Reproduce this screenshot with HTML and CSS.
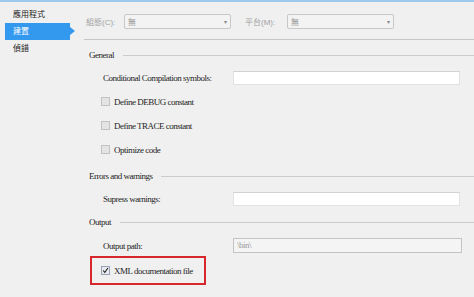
FILE: index.html
```html
<!DOCTYPE html>
<html lang="zh-Hant">
<head>
  <meta charset="UTF-8" />
  <title>建置</title>
  <link rel="stylesheet" href="styles.css">
</head>
<body>
  <div class="topline"></div>

  <div class="layout">
    <!-- Navegación lateral -->
    <ul class="sidebar">
      <li>應用程式</li>
      <li class="activo">建置</li>
      <li>偵錯</li>
    </ul>

    <div class="contenido">
      <div class="config">
        <label class="cfg-label cfg-1">組態(C):</label>
        <div class="combo"><span>無</span><i>▾</i></div>
        <label class="cfg-label cfg-2">平台(M):</label>
        <div class="combo"><span>無</span><i>▾</i></div>
      </div>

      <div class="panel">
        <div class="grupo"><span>General</span></div>
        <div class="campo"><label>Conditional Compilation symbols:</label><div class="caja"></div></div>
        <div class="check"><span class="box"></span>Define DEBUG constant</div>
        <div class="check"><span class="box"></span>Define TRACE constant</div>
        <div class="check"><span class="box"></span>Optimize code</div>

        <div class="grupo separado"><span>Errors and warnings</span></div>
        <div class="campo"><label>Supress warnings:</label><div class="caja"></div></div>

        <div class="grupo"><span>Output</span></div>
        <div class="campo alto"><label>Output path:</label><div class="caja gris">\bin\</div></div>
        <div class="check marcado">
          <span class="box"><svg width="9" height="9" viewBox="0 0 9 9"><path d="M1.5 4.5 L3.6 7 L7.6 1.3" fill="none" stroke="#1a1a1a" stroke-width="1.4"/></svg></span>XML documentation file
        </div>
      </div>
    </div>
  </div>
</body>
</html>
```

FILE: styles.css
```css
body { margin: 0; background: #f0f0f0; width: 474px; height: 297px; overflow: hidden; font-family: 'Liberation Serif', serif; color: #1e1e1e; }
.topline { height: 2px; background: #9cc9ec; border-bottom: 1px solid #f6f0ea; }

.layout { display: flex; }
.sidebar { list-style: none; margin: 0; padding: 3px 0 0 0; width: 84px; flex-shrink: 0; font-family: 'Liberation Sans', 'Noto Sans CJK TC', sans-serif; font-size: 8px; color: #222; }
.sidebar li { height: 17px; line-height: 17px; padding-left: 13px; }
.sidebar li.activo { position: relative; margin-left: 5px; width: 57px; padding-left: 8px; background: #3399ee; color: #fff; }
.sidebar li.activo::after { content: ""; position: absolute; right: -5px; top: 4px; border-left: 5px solid #3399ee; border-top: 4.5px solid transparent; border-bottom: 4.5px solid transparent; }

.contenido { flex: 1; }
.config { height: 36px; display: flex; align-items: center; border-bottom: 1px solid #c6c6c6; font-family: 'Liberation Sans', 'Noto Sans CJK TC', sans-serif; font-size: 8px; color: #a2a2a2; }
.cfg-label { padding-left: 2px; }
.cfg-1 { width: 38px; }
.cfg-2 { width: 42px; margin-left: 12px; }
.combo { width: 105px; height: 13px; border: 1px solid #c8c8c8; border-radius: 2px; background: #f3f3f3; display: flex; align-items: center; justify-content: space-between; padding: 0; }
.combo span { padding-left: 3px; color: #8c8c8c; }
.combo i { font-style: normal; font-size: 6px; padding-right: 3px; color: #888; }

.panel { display: flex; flex-direction: column; gap: 9px; padding-top: 8px; font-size: 9px; letter-spacing: -0.5px; }
.grupo { height: 14px; display: flex; align-items: center; padding-left: 5px; }
.grupo::after { content: ""; flex: 1; height: 1px; background: #cbcbcb; margin-left: 9px; }
.grupo.separado { margin-top: 3px; }
.campo { height: 14px; display: flex; align-items: center; padding-left: 19px; }
.campo.alto { height: 15px; }
.campo label { width: 130px; }
.caja { width: 227px; height: 100%; box-sizing: border-box; background: #fff; border: 1px solid #e2e2e2; border-top-color: #d2d2d2; }
.caja.gris { width: 229px; background: #f4f4f4; border: 1px solid #c4c4c4; color: #9a9a9a; padding-left: 3px; line-height: 13px; }
.check { height: 15px; display: flex; align-items: center; padding-left: 17px; }
.box { width: 7px; height: 7px; margin-right: 4px; border: 1px solid #c2c2c2; background: #e4e4e4; display: flex; align-items: center; justify-content: center; }
.check.marcado { margin-top: -6px; margin-left: 6px; width: 103px; height: 25px; padding-left: 9px; border: 2px solid #d7262c; box-sizing: content-box; }
.check.marcado .box { background: #e8eaf0; border-color: #9aa3b5; }
```
